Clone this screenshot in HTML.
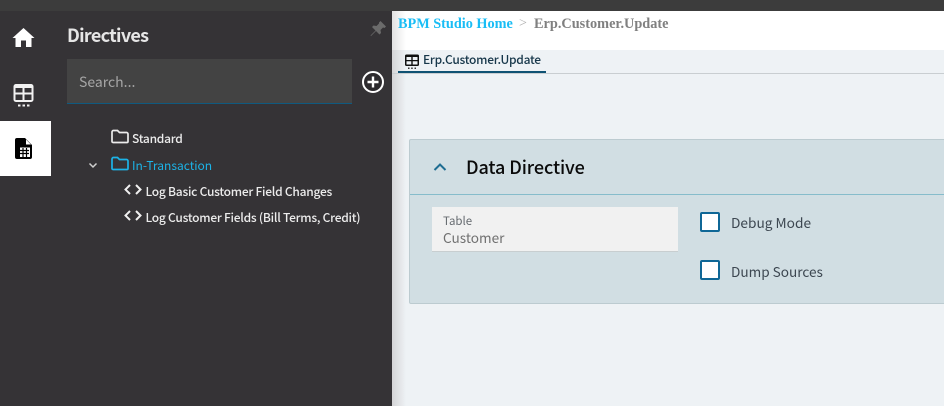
<!DOCTYPE html>
<html><head><meta charset="utf-8"><style>
*{box-sizing:border-box}
html,body{margin:0;padding:0}
body{width:944px;height:406px;overflow:hidden;position:relative;background:#eef2f5;font-family:"Noto Sans CJK JP","Liberation Sans",sans-serif}
.a{position:absolute;white-space:nowrap;line-height:1}
svg{position:absolute;display:block}
</style></head><body>
<div class="a" style="left:0;top:0;width:944px;height:11px;background:#3c3c3c"></div>
<div class="a" style="left:0;top:11px;width:392px;height:395px;background:#353336"></div>
<div class="a" style="left:392px;top:11px;width:14px;height:395px;background:linear-gradient(90deg,#d4d4d6,rgba(238,242,245,0))"></div>
<div class="a" style="left:392px;top:11px;width:552px;height:39px;background:linear-gradient(90deg,#e2e2e2,#fff 14px)"></div>
<div class="a" style="left:0;top:121px;width:51px;height:55px;background:#fff"></div>

<svg style="left:12px;top:27px" width="23" height="21" viewBox="0 0 23 21"><path d="M11.5 1 L22.5 11 L19.5 11 L19.5 20 L14 20 L14 13.5 L9 13.5 L9 20 L3.5 20 L3.5 11 L.5 11 Z" fill="#fff"/></svg>
<svg style="left:13px;top:84px" width="21" height="23" viewBox="0 0 21 23"><rect x=".5" width="20" height="18" rx="2.500" fill="#f2f2f2"/><path d="M2.500 4h7v4.500h-7zM11.500 4h7v4.500h-7zM2.500 10.500h7V16h-7zM11.500 10.500h7V16h-7z" fill="#353336"/><path d="M5 20.500h2.500v2H5zM9.500 20.500H12v2H9.500zM14 20.500h2.500v2H14z" fill="#f2f2f2"/></svg>
<svg style="left:14px;top:137px" width="19" height="23" viewBox="0 0 19 23"><path d="M1 3a2 2 0 0 1 2-2h8l7 7v12a2 2 0 0 1-2 2H3a2 2 0 0 1-2-2z" fill="#000"/><path d="M6 10.500h10v9.500H6z" fill="#fff"/><path d="M6 13.500h9M6 16.500h9M9 11v9M12.500 11v9" stroke="#000" stroke-width="1.200"/><path d="M12 2.500v5h5" fill="#fff"/></svg>

<div class="a" style="left:67px;top:26px;font-size:18px;font-weight:700;color:#e6e6e6;letter-spacing:-.7px">Directives</div>
<div class="a" style="left:67px;top:59px;width:285px;height:45px;background:#434343;border-bottom:1px solid #0f5a80"></div>
<div class="a" style="left:79px;top:75px;font-size:14px;color:#a6a6a6">Search...</div>
<svg style="left:370px;top:20px" width="17" height="17" viewBox="0 0 17 17"><path d="M10.500 1 L16 6.500 L14.500 8 L13 7.500 L10.500 10 L11 13 L9.500 14.500 L6 11 L1 16 L.5 15.500 L5.500 10.500 L2 7 L3.500 5.500 L6.500 6 L9 3.500 L9 2.500 Z" fill="#6b6b6b"/></svg>
<svg style="left:361px;top:70px" width="24" height="24" viewBox="0 0 24 24"><circle cx="12" cy="12" r="10" fill="#2d2b2e" stroke="#fff" stroke-width="2"/><path d="M12 6.500v11M6.500 12h11" stroke="#fff" stroke-width="2.400"/></svg>

<svg style="left:111px;top:129px" width="18" height="15" viewBox="0 0 18 15"><path d="M1 3a1.500 1.500 0 0 1 1.500-1.500h4l2 2h7A1.500 1.500 0 0 1 17 5v7.500a1 1 0 0 1-1 1H2a1 1 0 0 1-1-1z" fill="none" stroke="#ececec" stroke-width="1.700"/></svg>
<div class="a" style="left:132px;top:133px;font-size:12px;font-weight:500;color:#ececec;letter-spacing:-.25px">Standard</div>
<svg style="left:88px;top:162px" width="10" height="7" viewBox="0 0 10 7"><path d="M1.500 1.500 L5 5 L8.500 1.500" fill="none" stroke="#d0d0d0" stroke-width="1.500"/></svg>
<svg style="left:111px;top:156px" width="18" height="15" viewBox="0 0 18 15"><path d="M1 3a1.500 1.500 0 0 1 1.500-1.500h4l2 2h7A1.500 1.500 0 0 1 17 5v7.500a1 1 0 0 1-1 1H2a1 1 0 0 1-1-1z" fill="none" stroke="#1cb4e8" stroke-width="1.700"/></svg>
<div class="a" style="left:132px;top:160px;font-size:12px;color:#1cb4e8">In-Transaction</div>
<svg style="left:124px;top:184px" width="18" height="11" viewBox="0 0 18 11"><path d="M6 1 L1.500 5.500 L6 10 M12 1 L16.500 5.500 L12 10" fill="none" stroke="#f0f0f0" stroke-width="2"/></svg>
<div class="a" style="left:145.500px;top:186px;font-size:12px;font-weight:500;color:#ececec;letter-spacing:-.25px">Log Basic Customer Field Changes</div>
<svg style="left:124px;top:210px" width="18" height="11" viewBox="0 0 18 11"><path d="M6 1 L1.500 5.500 L6 10 M12 1 L16.500 5.500 L12 10" fill="none" stroke="#f0f0f0" stroke-width="2"/></svg>
<div class="a" style="left:145.500px;top:212px;font-size:12px;font-weight:500;color:#ececec;letter-spacing:-.25px">Log Customer Fields (Bill Terms, Credit)</div>

<div class="a" style="left:398px;top:16px;font:700 14.250px 'Liberation Serif',serif;color:#19bdf5">BPM Studio Home</div>
<div class="a" style="left:519px;top:16px;font:400 14px 'Liberation Serif',serif;color:#b0b0b0">&gt;</div>
<div class="a" style="left:534px;top:16px;font:700 14.300px 'Liberation Serif',serif;color:#808080">Erp.Customer.Update</div>

<div class="a" style="left:392px;top:73px;width:552px;height:1px;background:#c9ced1"></div>
<div class="a" style="left:398px;top:71px;width:148px;height:2px;background:#0f5273"></div>
<svg style="left:405px;top:54px" width="14" height="16" viewBox="0 0 14 16"><rect y=".5" width="14" height="11.500" rx="1.500" fill="#111"/><path d="M1.500 3h4.800v3H1.500zM7.700 3h4.800v3H7.700zM1.500 7.200h4.800V10.500H1.500zM7.700 7.200h4.800V10.500H7.700z" fill="#eef2f5"/><path d="M3 13.500h1.500V15H3zM6.200 13.500h1.500V15H6.200zM9.500 13.500H11V15H9.500z" fill="#333"/></svg>
<div class="a" style="left:423px;top:54px;font-size:12px;font-weight:500;color:#17374a;letter-spacing:-.27px">Erp.Customer.Update</div>

<div class="a" style="left:409px;top:139px;width:545px;height:165px;background:#d1dee3;border:1px solid #bccbd0;border-radius:2px"></div>
<div class="a" style="left:410px;top:194px;width:534px;height:1px;background:#86bccb"></div>
<svg style="left:433px;top:162px" width="14" height="10" viewBox="0 0 14 10"><path d="M1.500 8 L7 2.500 L12.500 8" fill="none" stroke="#1f6d92" stroke-width="2"/></svg>
<div class="a" style="left:466px;top:158px;font-size:18px;font-weight:500;color:#0a0a0a;letter-spacing:-.1px">Data Directive</div>

<div class="a" style="left:432px;top:207px;width:246px;height:45px;background:#f1f1f1;border-bottom:1px solid #c8ced0"></div>
<div class="a" style="left:443px;top:216px;font-size:11.500px;color:#666b70">Table</div>
<div class="a" style="left:443px;top:231px;font-size:13.600px;color:#707070">Customer</div>

<div class="a" style="left:700px;top:212px;width:20px;height:20px;background:#fff;border:2px solid #0f6796;border-radius:2px"></div>
<div class="a" style="left:731px;top:216px;font-size:13.700px;color:#3c4650">Debug Mode</div>
<div class="a" style="left:700px;top:260px;width:20px;height:20px;background:#fff;border:2px solid #0f6796;border-radius:2px"></div>
<div class="a" style="left:731px;top:265px;font-size:13.600px;color:#3c4650">Dump Sources</div>
</body></html>
